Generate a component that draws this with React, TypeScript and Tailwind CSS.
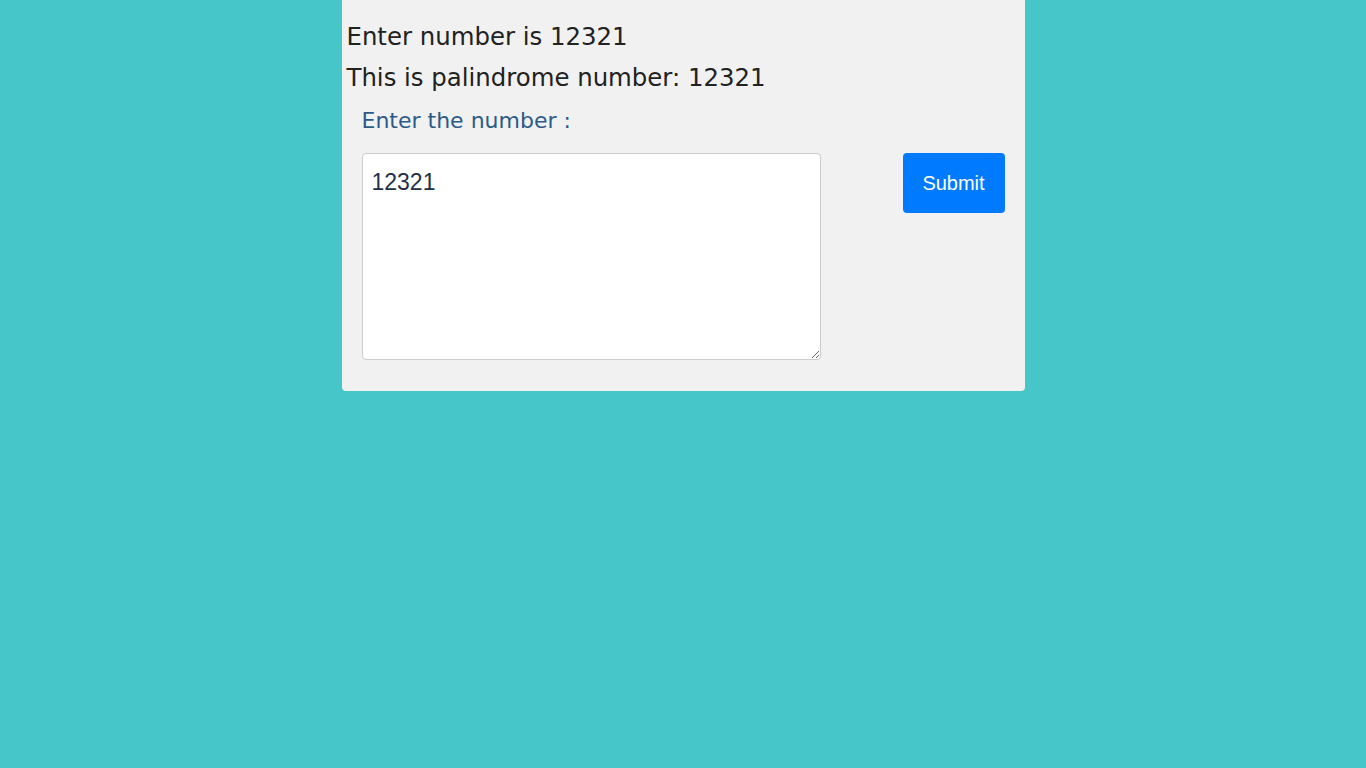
export default function App() {
  return (
    <div className="min-h-screen w-full bg-[#46c6c8]">
      <div className="mx-auto w-[683px] rounded-b-[4px] bg-[#f1f1f1] pt-[16px] pb-[31px]">
        <p className="pl-[5px] text-[24.4px] leading-[41px] text-[#222222] [font-family:'DejaVu_Sans',sans-serif]">
          Enter number is 12321
        </p>
        <p className="pl-[5px] text-[24.4px] leading-[41px] text-[#222222] [font-family:'DejaVu_Sans',sans-serif]">
          This is palindrome number: 12321
        </p>
        <div className="px-[20px]">
          <label className="mt-[8px] block text-[22px] leading-[30px] text-[#2d5b87] [font-family:'DejaVu_Sans',sans-serif]">
            Enter the number :
          </label>
          <div className="mt-[17px] flex items-start justify-between">
            <textarea
              defaultValue="12321"
              className="h-[207px] w-[459px] resize-y rounded-[4px] border border-[#cccccc] bg-white px-[9px] pt-[15px] pb-[13px] text-[23px] leading-[26px] text-[#1f2f4a] outline-none [font-family:'Liberation_Sans',Arial,sans-serif]"
            />
            <button className="h-[60px] w-[102px] rounded-[4px] bg-[#007bff] text-[20px] text-white [font-family:'Liberation_Sans',Arial,sans-serif]">
              Submit
            </button>
          </div>
        </div>
      </div>
    </div>
  );
}
